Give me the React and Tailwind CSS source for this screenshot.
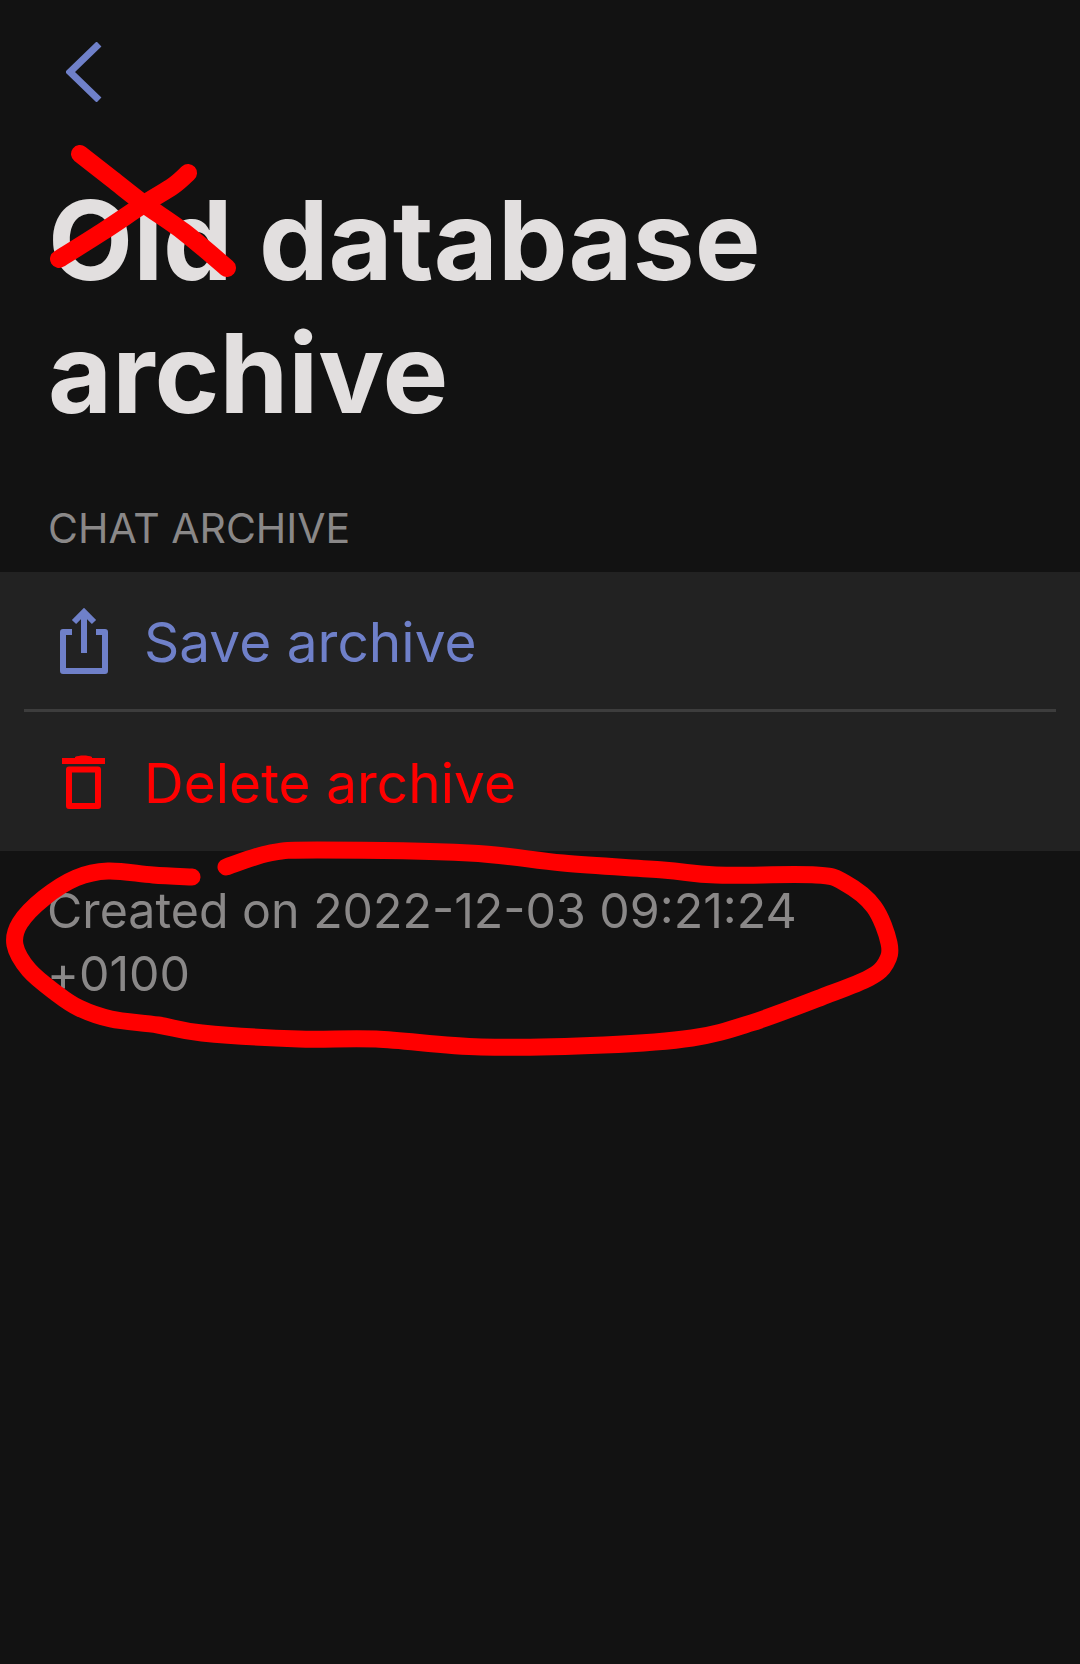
const smooth = (p) => {
  let d = `M${p[0][0]} ${p[0][1]}`;
  for (let i = 0; i < p.length - 1; i++) {
    const a = p[i - 1] || p[i];
    const b = p[i];
    const c = p[i + 1];
    const e = p[i + 2] || c;
    d += ` C${b[0] + (c[0] - a[0]) / 6} ${b[1] + (c[1] - a[1]) / 6} ${c[0] - (e[0] - b[0]) / 6} ${c[1] - (e[1] - b[1]) / 6} ${c[0]} ${c[1]}`;
  }
  return d;
};

const ring = [
  [192, 877], [153, 875], [108, 871], [76, 878], [44, 898], [20, 923], [15, 945], [29, 970],
  [56, 993], [79, 1008], [111, 1019], [158, 1025], [202, 1033], [299, 1039], [376, 1039],
  [481, 1047], [604, 1045], [692, 1038], [751, 1023], [822, 997], [869, 978], [886, 963],
  [889, 943], [874, 907], [845, 883], [816, 875], [716, 875], [663, 870], [563, 863],
  [469, 853], [317, 850], [270, 853], [226, 867],
];
const crossA = [[80, 154], [112, 179], [144, 204], [184, 232], [227, 268]];
const crossB = [[188, 173], [173, 186], [144, 204], [102, 232], [59, 259]];

export default function App() {
  return (
    <div className="relative w-[1080px] h-[1664px] overflow-hidden bg-[#121212] font-['Inter','Liberation_Sans',sans-serif]">
      <div className="pl-[66px] pt-[42px] h-[174px]">
        <svg width="36" height="60" viewBox="0 0 36 60" fill="none" className="block">
          <path d="M33 2 L4 30 L33 58" stroke="#6f80c9" strokeWidth="7" />
        </svg>
      </div>
      <h1 className="mx-[48px] text-[110.5px] leading-[133px] font-bold text-[#e2dfdf]">
        Old database archive
      </h1>
      <div className="mt-[63px] ml-[48px] text-[41px] leading-[50px] text-[#8a8888] uppercase">Chat archive</div>
      <div className="mt-[19px] bg-[#222222] flex flex-col">
        <div className="h-[137px] flex items-center pl-[60px] gap-[36px] text-[55px] text-[#6f80c9]">
          <svg width="48" height="66" viewBox="0 0 48 66" fill="none" className="shrink-0">
            <path d="M12 24 H3 V63 H45 V24 H36" stroke="#6f80c9" strokeWidth="6" strokeLinejoin="round" />
            <path d="M24 4 V45" stroke="#6f80c9" strokeWidth="6" />
            <path d="M14 14 L24 4 L34 14" stroke="#6f80c9" strokeWidth="6" />
          </svg>
          <span className="mt-[4px]">Save archive</span>
        </div>
        <div className="mx-[24px] h-[3px] bg-[#3d3d3d]" />
        <div className="h-[139px] flex items-center pl-[62px] gap-[39px] text-[55px] text-[#ff0000]">
          <svg width="43" height="54" viewBox="0 0 43 54" fill="none" className="shrink-0">
            <path d="M0 6 H43" stroke="#ff0000" strokeWidth="6" />
            <path d="M13 2 C17 0 26 0 30 2 V4 H13 Z" fill="#ff0000" />
            <path d="M7 14.5 H36 V51 H7 Z" stroke="#ff0000" strokeWidth="6" strokeLinejoin="round" />
          </svg>
          <span className="mt-[4px]">Delete archive</span>
        </div>
      </div>
      <p className="mt-[28px] ml-[47px] mr-[140px] text-[48.3px] leading-[63px] text-[#8a8888]">
        Created on 2022-12-03 09:21:24 +0100
      </p>
      <svg width="1080" height="1664" viewBox="0 0 1080 1664" fill="none" className="absolute inset-0 pointer-events-none">
        <g stroke="#ff0000" strokeLinecap="round" strokeLinejoin="round">
          <path d={smooth(crossA)} strokeWidth="18" />
          <path d={smooth(crossB)} strokeWidth="18" />
          <path d={smooth(ring)} strokeWidth="17" />
        </g>
      </svg>
    </div>
  );
}
